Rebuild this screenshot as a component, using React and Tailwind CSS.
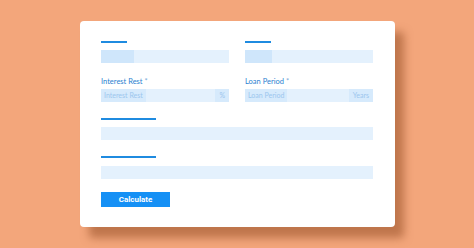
import React from 'react';

const Bar = ({ w }) => <div className={`h-[2px] ${w} bg-[#1f8be0]`} />;

const Field = ({ label, placeholder, suffix, prefixW }) => (
  <div className="flex flex-col">
    {label ? (
      <div className="h-[9px] flex items-center text-[7.5px] leading-none text-[#2a7fd0]">
        {label} <span className="ml-[2px] text-[#7aa9d8]">*</span>
      </div>
    ) : (
      <Bar w="w-[26px]" />
    )}
    <div className={`${label ? 'mt-[3px]' : 'mt-[7px]'} h-[13px] flex bg-[#e4f1fd]`}>
      {placeholder ? (
        <>
          <div className="h-full flex items-center px-[3px] bg-[#d6eafc] text-[7px] text-[#9cc6ee]">
            {placeholder}
          </div>
          <div className="flex-1" />
          <div className="h-full flex items-center px-[4px] bg-[#d6eafc] text-[7px] text-[#9cc6ee]">
            {suffix}
          </div>
        </>
      ) : (
        <div className={`h-full ${prefixW} bg-[#cfe6fb]`} />
      )}
    </div>
  </div>
);

export default function App() {
  return (
    <div className="w-[474px] h-[248px] bg-[#f3a67b] pt-[21px] pl-[80px] font-['Lato',sans-serif]">
      <div className="w-[315px] h-[206px] bg-white rounded-[4px] shadow-[9px_11px_9px_rgba(140,70,30,0.5)] pt-[20px] px-[21px] flex flex-col">
        <div className="grid grid-cols-2 gap-x-[16px] w-[272px]">
          <Field prefixW="w-[33px]" />
          <Field prefixW="w-[27px]" />
        </div>
        <div className="grid grid-cols-2 gap-x-[16px] w-[272px] mt-[14px]">
          <Field label="Interest Rest" placeholder="Interest Rest" suffix="%" />
          <Field label="Loan Period" placeholder="Loan Period" suffix="Years" />
        </div>
        <div className="mt-[16px] w-[272px]">
          <Bar w="w-[55px]" />
          <div className="mt-[7px] h-[13px] bg-[#e4f1fd]" />
        </div>
        <div className="mt-[16px] w-[272px]">
          <Bar w="w-[55px]" />
          <div className="mt-[8px] h-[13px] bg-[#e4f1fd]" />
        </div>
        <button className="mt-[13px] w-[69px] h-[15px] bg-[#1590f5] text-white text-[8px] leading-none font-bold flex items-center justify-center font-['Roboto',sans-serif]">
          Calculate
        </button>
      </div>
    </div>
  );
}
